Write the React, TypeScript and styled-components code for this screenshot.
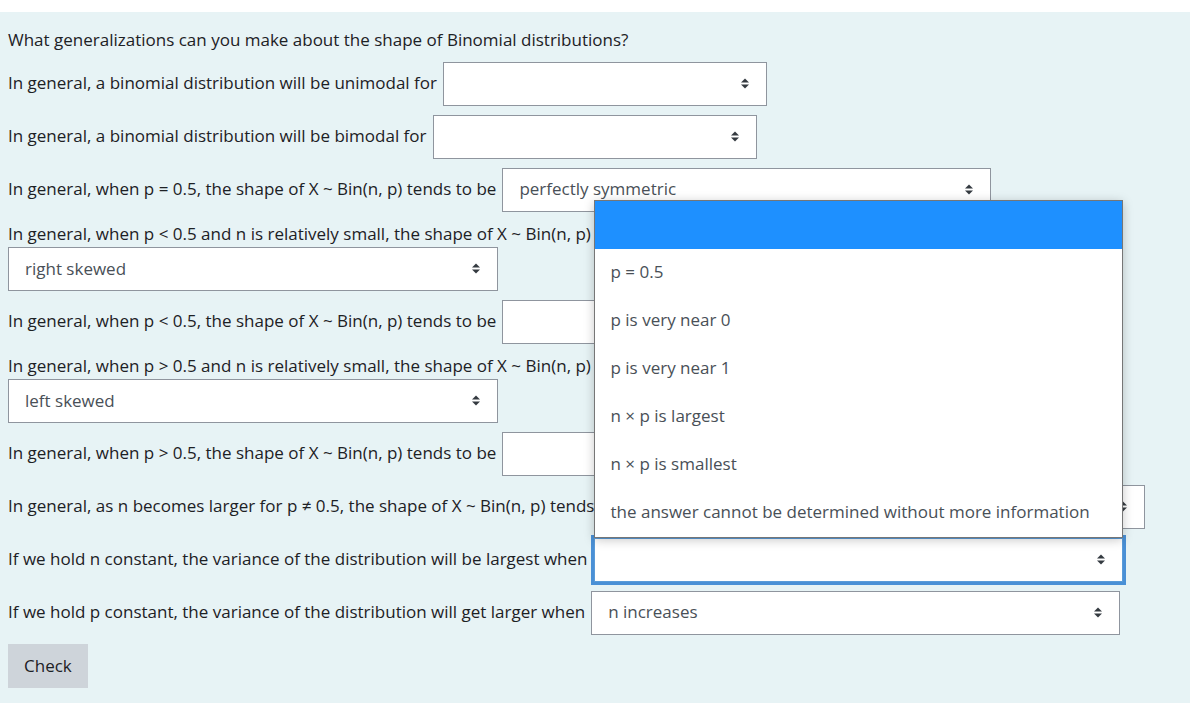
import React from 'react';
import styled, { createGlobalStyle } from 'styled-components';

const GlobalStyle = createGlobalStyle`
  body {
    margin: 0;
    background: #fff;
    font-family: "Open Sans", "Noto Sans", sans-serif;
    font-size: 17px;
    color: #1d2125;
  }
`;

const Page = styled.div`
  padding: 12px 5px 13px 0;
`;

const Panel = styled.div`
  background: #e7f3f5;
  padding: 17px 8px 15px 8px;
`;

const Prompt = styled.p`
  margin: 0 0 10px;
  line-height: 22.5px;
`;

const Row = styled.div<{ $stacked?: boolean }>`
  display: flex;
  flex-wrap: wrap;
  align-items: center;
  column-gap: 6px;
  margin-bottom: 9px;
  line-height: ${(p) => (p.$stacked ? '26px' : '22.5px')};
`;

const Label = styled.span<{ $stacked?: boolean }>`
  white-space: nowrap;
  flex-basis: ${(p) => (p.$stacked ? '100%' : 'auto')};
`;

const SelectWrap = styled.div`
  position: relative;
`;

const SelectBox = styled.div<{ $width: number; $focused?: boolean }>`
  box-sizing: border-box;
  width: ${(p) => p.$width}px;
  height: 44px;
  display: flex;
  align-items: center;
  justify-content: space-between;
  padding: 0 16px 0 16px;
  background: #fff;
  border: 1px solid ${(p) => (p.$focused ? '#5a9bd8' : '#8f959e')};
  box-shadow: ${(p) => (p.$focused ? '0 0 0 3px #4a90d6' : 'none')};
  color: #495057;
`;

const Arrows = () => (
  <svg width="10" height="11" viewBox="0 0 10 11" style={{ flexShrink: 0 }}>
    <path d="M1 4.6 L5 0.6 L9 4.6 Z" fill="#343a40" />
    <path d="M1 6.4 L5 10.4 L9 6.4 Z" fill="#343a40" />
  </svg>
);

const Dropdown = styled.ul`
  position: absolute;
  left: 0;
  bottom: 100%;
  width: 100%;
  box-sizing: border-box;
  margin: 0;
  padding: 0;
  list-style: none;
  background: #fff;
  border: 1px solid #767676;
  box-shadow: 0 2px 10px rgba(0, 0, 0, 0.22);
  z-index: 5;
`;

const Option = styled.li<{ $active?: boolean }>`
  height: 48px;
  display: flex;
  align-items: center;
  padding: 0 16px;
  background: ${(p) => (p.$active ? '#1e90ff' : '#fff')};
  color: #495057;
  white-space: nowrap;
`;

const CheckButton = styled.button`
  font: inherit;
  color: #1d2125;
  background: #ced4da;
  border: none;
  border-radius: 0;
  height: 44px;
  padding: 0 16px;
`;

type Field = {
  label: string;
  width: number;
  value?: string;
  stacked?: boolean;
  focused?: boolean;
};

const fields: Field[] = [
  { label: 'In general, a binomial distribution will be unimodal for', width: 324 },
  { label: 'In general, a binomial distribution will be bimodal for', width: 324 },
  {
    label: 'In general, when p = 0.5, the shape of X ~ Bin(n, p) tends to be',
    width: 489,
    value: 'perfectly symmetric',
  },
  {
    label: 'In general, when p < 0.5 and n is relatively small, the shape of X ~ Bin(n, p) tends to be',
    width: 490,
    value: 'right skewed',
    stacked: true,
  },
  { label: 'In general, when p < 0.5, the shape of X ~ Bin(n, p) tends to be', width: 490 },
  {
    label: 'In general, when p > 0.5 and n is relatively small, the shape of X ~ Bin(n, p) tends to be',
    width: 490,
    value: 'left skewed',
    stacked: true,
  },
  { label: 'In general, when p > 0.5, the shape of X ~ Bin(n, p) tends to be', width: 490 },
  {
    label: 'In general, as n becomes larger for p \u2260 0.5, the shape of X ~ Bin(n, p) tends to be',
    width: 500,
  },
  {
    label: 'If we hold n constant, the variance of the distribution will be largest when',
    width: 529,
    focused: true,
  },
  {
    label: 'If we hold p constant, the variance of the distribution will get larger when',
    width: 529,
    value: 'n increases',
  },
];

const openOptions = [
  '',
  'p = 0.5',
  'p is very near 0',
  'p is very near 1',
  'n \u00d7 p is largest',
  'n \u00d7 p is smallest',
  'the answer cannot be determined without more information',
];

export default function App() {
  return (
    <Page>
      <GlobalStyle />
      <Panel>
        <Prompt>What generalizations can you make about the shape of Binomial distributions?</Prompt>
        {fields.map((f) => (
          <Row key={f.label} $stacked={f.stacked}>
            <Label $stacked={f.stacked}>{f.label}</Label>
            <SelectWrap>
              <SelectBox $width={f.width} $focused={f.focused}>
                <span>{f.value ?? ''}</span>
                <Arrows />
              </SelectBox>
              {f.focused && (
                <Dropdown>
                  {openOptions.map((o, i) => (
                    <Option key={i} $active={i === 0}>
                      {o}
                    </Option>
                  ))}
                </Dropdown>
              )}
            </SelectWrap>
          </Row>
        ))}
        <CheckButton>Check</CheckButton>
      </Panel>
    </Page>
  );
}
